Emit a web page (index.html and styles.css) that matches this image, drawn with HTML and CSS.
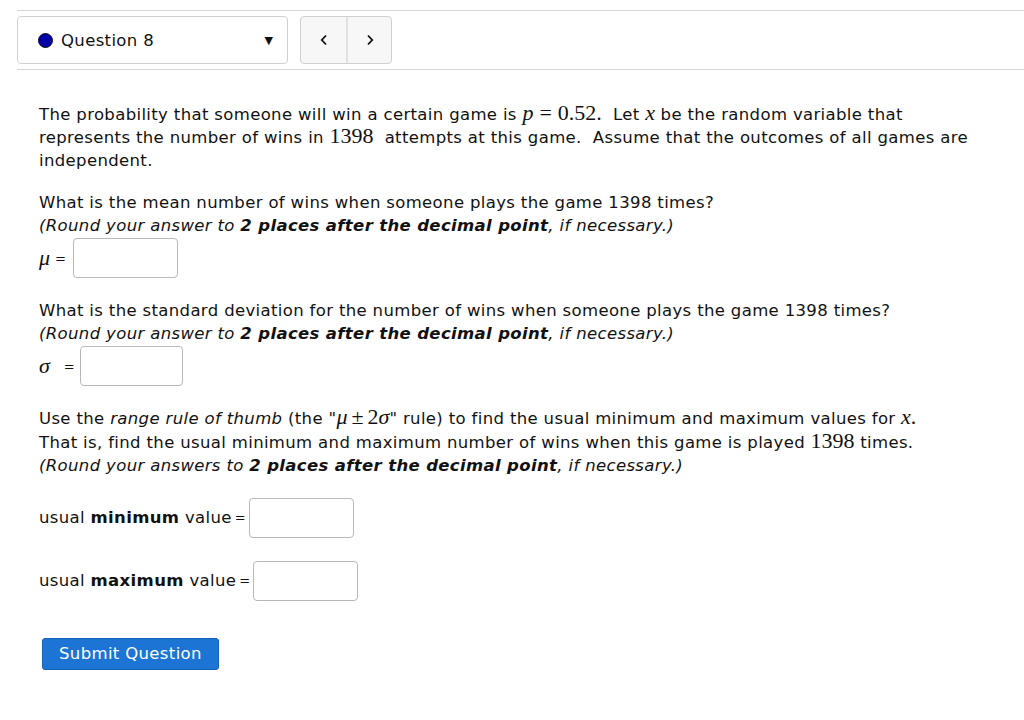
FILE: index.html
```html
<!DOCTYPE html>
<html>
    <head>
        <title>Question 8</title>
        <link rel="stylesheet" href="styles.css">
    </head>
    <body>
        <div class="top-bar">
            <div class="question-select">
                <span class="status-dot"></span>
                <span class="question-name">Question 8</span>
                <span class="select-arrow">&#9660;</span>
            </div>
            <div class="nav-buttons">
                <button class="nav-button">
                    <svg width="8" height="12" viewBox="0 0 8 12"><polyline points="6,1.5 1.8,6 6,10.5" fill="none" stroke="#111" stroke-width="1.8"/></svg>
                </button>
                <button class="nav-button">
                    <svg width="8" height="12" viewBox="0 0 8 12"><polyline points="2,1.5 6.2,6 2,10.5" fill="none" stroke="#111" stroke-width="1.8"/></svg>
                </button>
            </div>
        </div>

        <div class="question">
            <p class="intro">
                The probability that someone will win a certain game is <span class="math"><i>p</i><span class="rel">=</span>0.52.</span>&nbsp; Let <span class="math"><i>x</i></span> be the random variable that<br>
                represents the number of wins in <span class="math">1398</span>&nbsp; attempts at this game.&nbsp; Assume that the outcomes of all games are<br>
                independent.
            </p>

            <p class="part">
                What is the mean number of wins when someone plays the game 1398 times?<br>
                <i>(Round your answer to <b>2 places after the decimal point</b>, if necessary.)</i>
            </p>
            <div class="answer-row">
                <span class="math"><i>&mu;</i></span> <span class="eq">=</span>
                <input class="answer-box mu-box" type="text">
            </div>

            <p class="part">
                What is the standard deviation for the number of wins when someone plays the game 1398 times?<br>
                <i>(Round your answer to <b>2 places after the decimal point</b>, if necessary.)</i>
            </p>
            <div class="answer-row">
                <span class="math"><i>&sigma;</i></span> <span class="eq sigma-eq">=</span>
                <input class="answer-box sigma-box" type="text">
            </div>

            <p class="part range-part">
                Use the <i>range rule of thumb</i> (the "<span class="math"><i>&mu;</i><span class="op">&plusmn;</span>2<i>&sigma;</i></span>" rule) to find the usual minimum and maximum values for <span class="math"><i>x</i>.</span><br>
                That is, find the usual minimum and maximum number of wins when this game is played <span class="math">1398</span> times.<br>
                <i>(Round your answers to <b>2 places after the decimal point</b>, if necessary.)</i>
            </p>

            <div class="answer-row min-row">
                <span>usual <b>minimum</b> value</span> <span class="eq">=</span>
                <input class="answer-box" type="text">
            </div>
            <div class="answer-row max-row">
                <span>usual <b>maximum</b> value</span> <span class="eq">=</span>
                <input class="answer-box" type="text">
            </div>

            <button class="submit-button">Submit Question</button>
        </div>
    </body>
</html>
```

FILE: styles.css
```css
body{
    margin: 0;
    background-color: white;
    font-family: "DejaVu Sans", Verdana, sans-serif;
    color: #111;
}
.top-bar{
    margin: 10px 0 0 17px;
    padding: 5px 0 5px 0;
    border-top: 1px solid #d6d6d6;
    border-bottom: 1px solid #d6d6d6;
    display: flex;
    gap: 12px;
}
.question-select{
    width: 271px;
    height: 48px;
    box-sizing: border-box;
    border: 1px solid #d0d0d0;
    border-radius: 4px;
    display: flex;
    align-items: center;
    padding-left: 20px;
}
.status-dot{
    width: 15px;
    height: 15px;
    box-sizing: border-box;
    border-radius: 50%;
    background-color: #0000a8;
    border: 1px solid #111;
    margin-right: 8px;
}
.question-name{
    font-size: 16.5px;
    letter-spacing: 0.35px;
    flex: 1;
}
.select-arrow{
    font-size: 11px;
    margin-right: 14px;
    color: #111;
}
.nav-buttons{
    display: flex;
    border: 1px solid #d0d0d0;
    border-radius: 4px;
    background-color: #f7f7f7;
    overflow: hidden;
    height: 48px;
    box-sizing: border-box;
}
.nav-button{
    width: 45px;
    background-color: transparent;
    border: none;
    padding: 0;
    display: flex;
    align-items: center;
    justify-content: center;
}
.nav-button + .nav-button{
    border-left: 2px solid #e2e2e2;
}
.question{
    padding: 0 10px 0 39px;
    font-size: 16.5px;
    letter-spacing: 0.35px;
}
.intro{
    margin: 33px 0 0 0;
    line-height: 23px;
}
.math{
    font-family: "Liberation Serif", "DejaVu Serif", serif;
    font-size: 22px;
    line-height: 0.8;
    letter-spacing: 0;
}
.rel{
    margin: 0 6px;
}
.op{
    margin: 0 4px;
}
.part{
    margin: 19px 0 0 0;
    line-height: 23px;
}
.answer-row{
    display: flex;
    align-items: center;
    gap: 5px;
    margin-top: 1px;
}
.eq{
    font-size: 13px;
}
.sigma-eq{
    margin-left: 9px;
}
.answer-box{
    width: 105px;
    height: 40px;
    box-sizing: border-box;
    border: 1px solid #b8b8b8;
    border-radius: 4px;
    margin: 0;
}
.mu-box{
    margin-left: 2px;
}
.sigma-box{
    width: 103px;
}
.answer-row + .part{
    margin-top: 21px;
}
.answer-row + .range-part{
    margin-top: 21px;
    line-height: 23.5px;
}
.min-row{
    margin-top: 20px;
    gap: 3px;
}
.max-row{
    margin-top: 23px;
    gap: 3px;
}
.submit-button{
    margin: 37px 0 0 3px;
    background-color: #1c74d4;
    color: white;
    border: 1px solid #1662b8;
    border-radius: 3px;
    font-family: "DejaVu Sans", sans-serif;
    font-size: 16.5px;
    letter-spacing: 0.35px;
    height: 32px;
    padding: 0 16px;
}
```
